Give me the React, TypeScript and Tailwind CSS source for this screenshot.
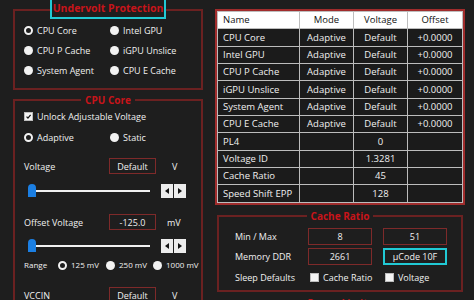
import React from 'react';

type Row = [string, string, string, string];

const rows: Row[] = [
  ['CPU Core', 'Adaptive', 'Default', '+0.0000'],
  ['Intel GPU', 'Adaptive', 'Default', '+0.0000'],
  ['CPU P Cache', 'Adaptive', 'Default', '+0.0000'],
  ['iGPU Unslice', 'Adaptive', 'Default', '+0.0000'],
  ['System Agent', 'Adaptive', 'Default', '+0.0000'],
  ['CPU E Cache', 'Adaptive', 'Default', '+0.0000'],
  ['PL4', '', '0', ''],
  ['Voltage ID', '', '1.3281', ''],
  ['Cache Ratio', '', '45', ''],
  ['Speed Shift EPP', '', '128', ''],
];

const Radio = ({ on, label }: { on?: boolean; label: string }) => (
  <div className="flex items-center gap-[4px] whitespace-nowrap">
    <span
      className={
        on
          ? 'w-[9px] h-[9px] shrink-0 rounded-full border-2 border-[#f2f2f2] bg-[#1e1e1e]'
          : 'w-[9px] h-[9px] shrink-0 rounded-full bg-[#f2f2f2]'
      }
    />
    <span>{label}</span>
  </div>
);

const Check = ({ on }: { on?: boolean }) => (
  <span className="w-[9px] h-[9px] shrink-0 bg-[#f4f4f4] border border-[#bdbdbd] flex items-center justify-center">
    {on && (
      <svg viewBox="0 0 9 9" className="w-[9px] h-[9px]">
        <path d="M2 4.6 L3.8 6.6 L7.2 2.4" stroke="#111" strokeWidth="1.6" fill="none" />
      </svg>
    )}
  </span>
);

const Box = ({ value, w = 'w-[47px]' }: { value: string; w?: string }) => (
  <div className={`${w} h-full border border-[#7e2a2a] flex items-center justify-center text-[#f0f0f0]`}>
    {value}
  </div>
);

const Arrow = ({ right }: { right?: boolean }) => (
  <div className="w-[12px] h-[14px] bg-[#ececec] flex items-center justify-center">
    <svg viewBox="0 0 4 6" className="w-[4px] h-[6px]">
      {right ? <path d="M0 0 L4 3 L0 6 Z" fill="#111" /> : <path d="M4 0 L0 3 L4 6 Z" fill="#111" />}
    </svg>
  </div>
);

const Slider = () => (
  <div className="flex items-center h-[15px]">
    <div className="ml-[4px] w-[122px] h-full flex items-center">
      <div className="w-[8px] h-[13px] shrink-0 rounded-t-full rounded-b-[1px] bg-[#1b7fe3]" />
      <div className="flex-1 h-[2px] bg-[#f0f0f0]" />
    </div>
    <div className="ml-[11px] flex gap-px">
      <Arrow />
      <Arrow right />
    </div>
  </div>
);

export default function App() {
  return (
    <div className="w-[474px] h-[300px] overflow-hidden bg-[#1e1e1e] flex text-[9px] text-[#f0f0f0] font-['Open_Sans','Noto_Sans',sans-serif] leading-none">
      {/* left column */}
      <div className="ml-[13px] w-[190px] shrink-0 flex flex-col">
        <fieldset className="border-2 border-[#6b2121] min-w-0 pb-[8px]">
          <legend className="mx-auto w-[116px] h-[19px] border-2 border-t-0 border-[#21c9d4] text-center whitespace-nowrap font-bold text-[10.5px] leading-[17px] text-[#c8141a]">
            Undervolt Protection
          </legend>
          <div className="pt-px pl-[9px] grid grid-cols-[86px_1fr] auto-rows-[20px] items-center">
            <Radio on label="CPU Core" />
            <Radio label="Intel GPU" />
            <Radio label="CPU P Cache" />
            <Radio label="iGPU Unslice" />
            <Radio label="System Agent" />
            <Radio label="CPU E Cache" />
          </div>
        </fieldset>

        <fieldset className="mt-[3px] border-2 border-[#6b2121] min-w-0 pb-[10px]">
          <legend className="mx-auto px-1 h-[14px] leading-[14px] font-bold text-[10px] text-[#c8141a]">CPU Core</legend>
          <div className="pl-[9px] flex flex-col">
            <div className="mt-px h-[16px] flex items-center gap-[4px]">
              <Check on />
              <span>Unlock Adjustable Voltage</span>
            </div>
            <div className="mt-[5px] h-[16px] grid grid-cols-[86px_1fr] items-center">
              <Radio on label="Adaptive" />
              <Radio label="Static" />
            </div>

            <div className="mt-[13px] h-[16px] flex items-center">
              <span className="w-[85px]">Voltage</span>
              <Box value="Default" />
              <span className="ml-[16px]">V</span>
            </div>
            <div className="mt-[9px]">
              <Slider />
            </div>

            <div className="mt-[16px] h-[16px] flex items-center">
              <span className="w-[85px]">Offset Voltage</span>
              <Box value="-125.0" />
              <span className="ml-[11px]">mV</span>
            </div>
            <div className="mt-[8px]">
              <Slider />
            </div>

            <div className="mt-[5px] h-[14px] flex items-center text-[8px]">
              <span className="w-[34px]">Range</span>
              <div className="w-[48px]">
                <Radio on label="125 mV" />
              </div>
              <div className="w-[47px]">
                <Radio label="250 mV" />
              </div>
              <Radio label="1000 mV" />
            </div>

            <div className="mt-[15px] h-[16px] flex items-center">
              <span className="w-[85px]">VCCIN</span>
              <Box value="Default" />
              <span className="ml-[16px]">V</span>
            </div>
          </div>
        </fieldset>
      </div>

      {/* right column */}
      <div className="ml-[12px] pt-[9px] w-[250px] shrink-0 flex flex-col">
        <div className="border-2 border-[#a02c2c]">
          <div className="p-px bg-[#bdbdbd] grid grid-cols-[81px_53px_53px_54px] auto-rows-[16.33px] gap-px text-[9.5px]">
            <div className="bg-white text-[#111] flex items-center pl-[5px]">Name</div>
            <div className="bg-white text-[#111] flex items-center justify-center">Mode</div>
            <div className="bg-white text-[#111] flex items-center justify-center">Voltage</div>
            <div className="bg-white text-[#111] flex items-center justify-center">Offset</div>
            {rows.map((r) => (
              <React.Fragment key={r[0]}>
                <div className="bg-[#1b1b1b] flex items-center pl-[5px]">{r[0]}</div>
                <div className="bg-[#1b1b1b] flex items-center justify-center">{r[1]}</div>
                <div className="bg-[#1b1b1b] flex items-center justify-center">{r[2]}</div>
                <div className="bg-[#1b1b1b] flex items-center justify-center">{r[3]}</div>
              </React.Fragment>
            ))}
          </div>
        </div>

        <fieldset className="mt-[4px] mx-[2px] border-2 border-[#6b2121] min-w-0 pb-[5px]">
          <legend className="mx-auto px-1 h-[14px] leading-[14px] font-bold text-[10px] text-[#c8141a]">Cache Ratio</legend>
          <div className="pl-[16px] flex flex-col">
            <div className="mt-[5px] h-[17px] flex items-center">
              <span className="w-[73px]">Min / Max</span>
              <Box value="8" w="w-[64px]" />
              <div className="w-[11px]" />
              <Box value="51" w="w-[64px]" />
            </div>
            <div className="mt-[3px] h-[17px] flex items-center">
              <span className="w-[73px]">Memory DDR</span>
              <Box value="2661" w="w-[64px]" />
              <div className="w-[11px]" />
              <div className="w-[64px] h-full border-2 border-[#21c9d4] flex items-center justify-center">µCode 10F</div>
            </div>
            <div className="mt-[6px] h-[14px] flex items-center">
              <span className="w-[75px]">Sleep Defaults</span>
              <div className="w-[75px] flex items-center gap-[4px]">
                <Check />
                <span>Cache Ratio</span>
              </div>
              <div className="flex items-center gap-[4px]">
                <Check />
                <span>Voltage</span>
              </div>
            </div>
          </div>
        </fieldset>

        <fieldset className="mt-[4px] mx-[2px] border-2 border-[#6b2121] min-w-0 h-[40px]">
          <legend className="mx-auto px-1 h-[14px] leading-[14px] font-bold text-[10px] text-[#c8141a]">Power Limits</legend>
        </fieldset>
      </div>
    </div>
  );
}
